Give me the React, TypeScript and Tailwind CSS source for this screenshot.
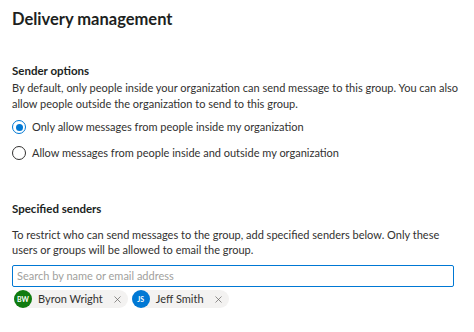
import { X } from "lucide-react";

const font = { fontFamily: 'Lato, "Noto Sans", sans-serif' };

function Chip({ initials, name, color }: { initials: string; name: string; color: string }) {
  return (
    <div className="flex h-[18px] items-center rounded-full bg-[#f3f2f1] pr-[5px]">
      <div
        className={`flex h-[18px] w-[18px] items-center justify-center rounded-full text-[7px] font-bold text-white ${color}`}
      >
        {initials}
      </div>
      <span className="ml-[6px] text-[11px] text-[#323130]">{name}</span>
      <X className="ml-[9px] h-[11px] w-[11px] text-[#605e5c]" strokeWidth={1.5} />
    </div>
  );
}

export default function App() {
  return (
    <div className="h-[332px] w-[474px] bg-white px-[12px] text-[#323130]" style={font}>
      <h1 className="pt-[7px] text-[16.5px] font-bold leading-[24px] text-[#201f1e]">
        Delivery management
      </h1>

      <h2 className="mt-[32px] text-[11.5px] font-bold leading-[16px] text-[#201f1e]">Sender options</h2>
      <p className="mt-[1px] text-[11px] leading-[16px]">
        By default, only people inside your organization can send message to this group. You can also
        allow people outside the organization to send to this group.
      </p>

      <div className="mt-[6px] flex flex-col gap-[8px]">
        <label className="flex h-[18px] items-center gap-[6px] text-[11px]">
          <span className="flex h-[14px] w-[14px] items-center justify-center rounded-full border border-[#0078d4]">
            <span className="h-[7px] w-[7px] rounded-full bg-[#0078d4]" />
          </span>
          Only allow messages from people inside my organization
        </label>
        <label className="flex h-[18px] items-center gap-[6px] text-[11px]">
          <span className="h-[14px] w-[14px] rounded-full border border-[#323130]" />
          Allow messages from people inside and outside my organization
        </label>
      </div>

      <h2 className="mt-[39px] text-[11.5px] font-bold leading-[16px] text-[#201f1e]">Specified senders</h2>
      <p className="mt-[10px] text-[11px] leading-[15px]">
        To restrict who can send messages to the group, add specified senders below. Only these users
        or groups will be allowed to email the group.
      </p>

      <div className="mt-[8px] flex h-[22px] w-[442px] items-center rounded-[2px] border-[1.5px] border-[#0078d4] px-[4px] text-[11px] text-[#a19f9d]">
        Search by name or email address
      </div>

      <div className="mt-[3px] flex gap-[4px] pl-[2px]">
        <Chip initials="BW" name="Byron Wright" color="bg-[#107c10]" />
        <Chip initials="JS" name="Jeff Smith" color="bg-[#0078d4]" />
      </div>
    </div>
  );
}
